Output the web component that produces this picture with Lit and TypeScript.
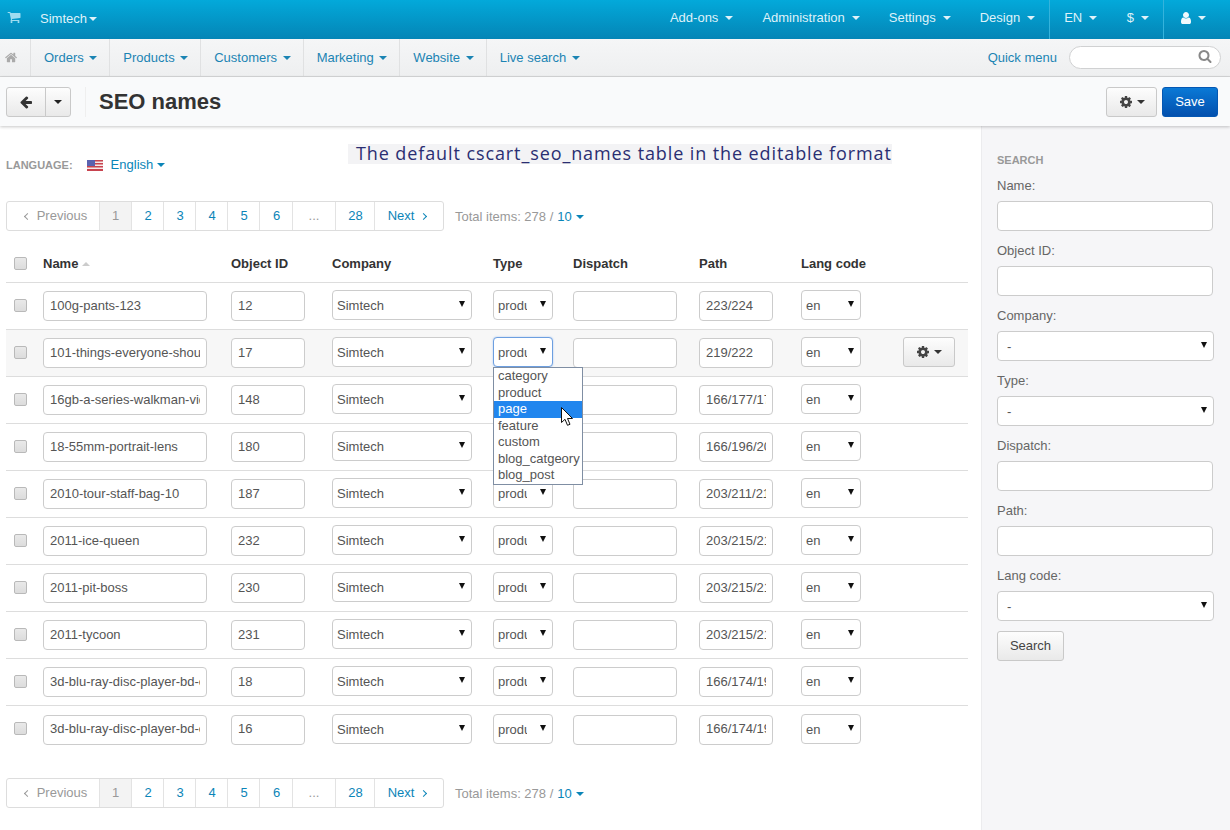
import { LitElement, html, css, svg } from "lit";
import { customElement } from "lit/decorators.js";

const P = {
  home: "M1408 992v480q0 26-19 45t-45 19h-384v-384h-256v384h-384q-26 0-45-19t-19-45v-480q0-1 .5-3t.5-3l575-474 575 474q1 2 1 6zm223-69l-62 74q-8 9-21 11h-3q-13 0-21-7l-692-577-692 577q-12 8-24 7-13-2-21-11l-62-74q-8-10-7-23.500t11-21.500l719-599q32-26 76-26t76 26l244 204v-195q0-14 9-23t23-9h192q14 0 23 9t9 23v408l219 182q10 8 11 21.500t-7 23.500z",
  cart: "M704 1536q0 52-38 90t-90 38-90-38-38-90 38-90 90-38 90 38 38 90zm896 0q0 52-38 90t-90 38-90-38-38-90 38-90 90-38 90 38 38 90zm128-1088v512q0 24-16.500 42.500t-40.500 21.500l-1044 122q13 60 13 70 0 16-24 64h920q26 0 45 19t19 45-19 45-45 19h-1024q-26 0-45-19t-19-45q0-11 8-31.500t16-36 21.500-40 15.500-29.500l-177-823h-204q-26 0-45-19t-19-45 19-45 45-19h256q16 0 28.500 6.500t19.500 15.500 13 24.500 8 26 5.500 29.500 4.500 26h1201q26 0 45 19t19 45z",
  user: "M1536 1399q0 109-62.500 187t-150.500 78h-854q-88 0-150.500-78t-62.500-187q0-85 8.500-160.500t31.500-152 58.500-131 94-89 134.500-34.500q131 128 313 128t313-128q76 0 134.500 34.500t94 89 58.500 131 31.500 152 8.500 160.500zm-256-887q0 159-112.500 271.500t-271.500 112.500-271.500-112.500-112.500-271.500 112.500-271.500 271.500-112.500 271.500 112.500 112.500 271.500z",
  cog: "M1152 896q0-106-75-181t-181-75-181 75-75 181 75 181 181 75 181-75 75-181zm512-109v222q0 12-8 23t-20 13l-185 28q-19 54-39 91 35 50 107 138 10 12 10 25t-9 23q-27 37-99 108t-94 71q-12 0-26-9l-138-108q-44 23-91 38-16 136-29 186-7 28-36 28h-222q-14 0-24.500-8.500t-11.500-21.500l-28-184q-49-16-90-37l-141 107q-10 9-25 9-14 0-25-11-126-114-165-168-7-10-7-23 0-12 8-23 15-21 51-66.500t54-70.500q-27-50-41-99l-183-27q-13-2-21-12.500t-8-23.500v-222q0-12 8-23t19-13l186-28q14-46 39-92-40-57-107-138-10-12-10-24 0-10 9-23 26-36 98.500-107.500t94.500-71.500q13 0 26 10l138 107q44-23 91-38 16-136 29-186 7-28 36-28h222q14 0 24.500 8.500t11.500 21.500l28 184q49 16 90 37l142-107q9-9 24-9 13 0 25 10 129 119 165 170 7 8 7 22 0 12-8 23-15 21-51 66.500t-54 70.500q26 50 41 98l183 28q13 2 21 12.500t8 23.500z",
  search: "M1216 832q0-185-131.500-316.500t-316.500-131.500-316.500 131.500-131.500 316.500 131.500 316.500 316.500 131.500 316.500-131.500 131.500-316.500zm512 832q0 52-38 90t-90 38q-54 0-90-38l-343-342q-179 124-399 124-143 0-273.500-55.500t-225-150-150-225-55.500-273.500 55.500-273.500 150-225 225-150 273.500-55.500 273.500 55.500 225 150 150 225 55.500 273.500q0 220-124 399l343 343q37 37 37 90z",
  back: "M1664 896v128q0 53-32.500 90.500t-84.500 37.500h-704l293 294q38 36 38 90t-38 90l-75 76q-37 37-90 37-52 0-90-37l-651-652q-37-37-37-90 0-52 37-91l651-650q38-38 90-38 52 0 90 38l75 74q38 38 38 91t-38 91l-293 293h704q52 0 84.500 37.500t32.500 90.500z",
};

const icon = (d: string, size: number, color: string) => html`<svg class="ic" width=${size} height=${size} viewBox="0 0 1792 1792" fill=${color}>${svg`<path d=${d}></path>`}</svg>`;

const ROWS = [
  ["100g-pants-123", "12", "223/224"],
  ["101-things-everyone-should-know", "17", "219/222"],
  ["16gb-a-series-walkman-video", "148", "166/177/178"],
  ["18-55mm-portrait-lens", "180", "166/196/206"],
  ["2010-tour-staff-bag-10", "187", "203/211/215"],
  ["2011-ice-queen", "232", "203/215/218"],
  ["2011-pit-boss", "230", "203/215/218"],
  ["2011-tycoon", "231", "203/215/218"],
  ["3d-blu-ray-disc-player-bd-c6500", "18", "166/174/190"],
  ["3d-blu-ray-disc-player-bd-c5500", "16", "166/174/190"],
];

const caret = () => html`<i class="caret"></i>`;

@customElement("app-root")
export class AppRoot extends LitElement {
  static styles = css`
    :host { display: block; width: 1230px; height: 830px; overflow: hidden; position: relative; font: 13px/18px "Liberation Sans", Arial, sans-serif; color: #555; background: #fff; }
    * { box-sizing: border-box; }
    .ic { display: block; flex: none; }
    .caret { display: inline-block; width: 0; height: 0; border: 4px solid transparent; border-top-color: currentColor; border-bottom: 0; flex: none; }
    .top { height: 39px; display: flex; align-items: center; background: linear-gradient(#03a9da, #0485b6); color: #dff2f9; padding-left: 7px; }
    .top .cart { margin-top: -6px; }
    .brand { display: flex; align-items: center; gap: 2px; margin-left: 19px; height: 39px; padding-bottom: 2px; }
    .spacer { flex: 1; }
    .menu { display: flex; align-items: center; gap: 7px; padding: 0 14.5px 3px; height: 39px; }
    .menu.tight { padding-right: 13.5px; }
    .menu.cur { padding-left: 15px; padding-right: 14px; }
    .menu.usr { padding-left: 15px; padding-right: 24px; gap: 5px; }
    .sep { width: 1px; height: 39px; background: #35b3dc; }
    .sub { height: 38px; display: flex; align-items: stretch; background: linear-gradient(#f5f6f7, #eeeff0); border-bottom: 1px solid #d6d7d8; color: #1b84b3; }
    .sub .home { width: 31px; border-right: 1px solid #e0e1e2; display: flex; align-items: center; padding-left: 5px; }
    .sub .item { display: flex; align-items: center; gap: 5.6px; padding: 0 12px 0 13px; border-right: 1px solid #e0e1e2; }
    .sub .item.end { border-right: 0; }
    .quick { display: flex; align-items: center; margin-right: 9px; gap: 12px; }
    .qsearch { width: 152px; height: 23px; border: 1px solid #d0d1d2; border-radius: 12px; background: #fff; display: flex; align-items: center; justify-content: flex-end; padding: 0 8px 3px 0; }
    .bar { height: 49px; background: #f9fafb; display: flex; align-items: center; padding: 0 12px 0 6px; box-shadow: 0 1px 3px rgba(0, 0, 0, .22); position: relative; z-index: 2; }
    .btn { display: flex; align-items: center; justify-content: center; height: 30px; border: 1px solid #c9c9c9; border-radius: 3px; background: linear-gradient(#fdfdfd, #e9e9e9); color: #444; font-size: 13px; }
    .bk { width: 40px; border-radius: 3px 0 0 3px; }
    .dd { width: 26px; margin-left: -1px; border-radius: 0 3px 3px 0; color: #222; }
    .bar .vr { width: 1px; height: 30px; background: #efefef; margin: 0 13px 0 14px; }
    h1 { margin: 0; font-size: 22px; line-height: 30px; font-weight: bold; color: #333; }
    .gear { width: 51px; gap: 4px; color: #333; }
    .save { width: 56px; margin-left: 5px; border: 1px solid #0457b3; background: linear-gradient(#0a79d6, #0350ae); color: #fff; }
    .body { display: flex; height: 704px; }
    .main { width: 981px; position: relative; padding: 0 13px 0 6px; }
    .side { width: 249px; border-left: 1px solid #ececee; background: #f6f6f8; padding: 25px 16px 0 15px; }
    .lang { height: 24px; margin-top: 27px; margin-bottom: 24px; display: flex; align-items: center; font-size: 11px; font-weight: bold; color: #999; }
    .lang .flag { margin: 0 8px 0 14px; display: block; }
    .lang a { display: flex; align-items: center; gap: 4px; font-size: 13px; font-weight: normal; color: #0b85b8; }
    .note { position: absolute; left: 348px; top: 18px; height: 20px; width: 544px; padding-left: 8px; background: #f3f3f5; color: #2a2e72; font: 18px/18px "Open Sans", "Noto Sans", sans-serif; letter-spacing: .9px; white-space: nowrap; }
    .pager { display: flex; align-items: center; height: 30px; }
    .pages { display: flex; height: 30px; border: 1px solid #ddd; border-radius: 3px; background: #fff; }
    .pages span { display: flex; align-items: center; justify-content: center; border-right: 1px solid #e3e3e3; color: #0b85b8; gap: 7px; }
    .pages span.num { padding-left: 1px; }
    .pages span:last-child { border-right: 0; padding-right: 4px; }
    .pages span:first-child { padding-left: 6px; }
    .pages .off { color: #999; }
    .pages .cur { background: #f3f3f3; color: #999; }
    .chev { width: 5px; height: 5px; border: solid currentColor; border-width: 1px 1px 0 0; transform: rotate(45deg); display: block; }
    .chev.l { transform: rotate(-135deg); }
    .total { margin-left: 11px; color: #999; display: flex; align-items: center; margin-top: 2px; gap: 4px; }
    .total b { font-weight: normal; color: #0b85b8; }
    .total .caret { color: #0b85b8; margin-left: 0; }
    .grid { display: grid; grid-template-columns: 8px 13px 16px 164px 24px 74px 27px 140px 21px 60px 20px 104px 22px 74px 28px 60px 42px 52px 1fr; align-items: center; }
    .cb { grid-column: 2; width: 13px; height: 13px; border: 1px solid #b9b9b9; border-radius: 2px; background: linear-gradient(#e9e9e9, #dcdcdc); }
    .row .cb { margin-top: -2px; }
    .thead { height: 42px; margin-top: 10px; padding-top: 4px; border-bottom: 1px solid #ddd; font-weight: bold; color: #333; }
    .thead .sort { display: inline-block; width: 0; height: 0; border: 4px solid transparent; border-bottom-color: #ccc; border-top: 0; margin-left: 4px; vertical-align: 2px; }
    .row { height: 47px; border-bottom: 1px solid #ddd; }
    .row.last { border-bottom: 0; }
    .row.hl { background: #f7f7f7; }
    .in { width: 100%; height: 30px; border: 1px solid #ccc; border-radius: 4px; background: #fff; padding: 0 6px 2px; font: 13px "Liberation Sans", Arial, sans-serif; color: #555; outline: 0; display: block; }
    .sel { display: flex; align-items: center; height: 30px; margin-top: -2px; border: 1px solid #ccc; border-radius: 4px; background: #fff; padding: 2px 4px 0; color: #555; position: relative; }
    .sel .t { width: 100%; overflow: hidden; white-space: nowrap; padding-right: 20px; }
    .sel .a { position: absolute; right: 6px; top: 10px; border: 3px solid transparent; border-top: 6px solid #111; border-bottom: 0; width: 0; height: 0; }
    .sel.focus { border-color: #6d9fe0; box-shadow: 0 0 2px #a6c6ef; }
    .sel.narrow .t { width: 29px; padding-right: 0; }
    .opts { position: absolute; left: 493px; top: 241px; width: 90px; height: 118px; border: 1px solid #7f8ea3; background: #fff; z-index: 5; line-height: 16.5px; color: #555; }
    .opts div { height: 16.5px; padding-left: 4px; white-space: nowrap; }
    .opts .on { background: #2186ee; color: #fff; }
    .cursor { position: absolute; left: 561px; top: 281px; z-index: 6; display: block; }
    .side h4 { margin: 0 0 8px; font-size: 11px; line-height: 18px; font-weight: bold; color: #999; letter-spacing: 0; }
    .f { height: 65px; }
    .f label { display: block; line-height: 18px; margin-bottom: 6px; color: #666; }
    .f .in { width: 216px; }
    .f .sel { width: 217px; margin-top: 0; padding: 2px 9px 0; }
    .go { width: 67px; margin-top: -1px; color: #444; }
    .gearbtn { width: 52px; gap: 4px; color: #333; margin-top: -2px; }
    .bottom { margin-top: 25px; }
  `;

  private sel(t: string, cls = "") {
    return html`<div class="sel ${cls}"><div class="t">${t}</div><i class="a"></i></div>`;
  }

  private pager(bottom = false) {
    const nums: [string, number, string][] = [["1", 32, "cur"], ["2", 32, "num"], ["3", 32, "num"], ["4", 32, "num"], ["5", 32, "num"], ["6", 33, "num"], ["...", 43, "off"], ["28", 39, "num"]];
    return html`<div class="pager ${bottom ? "bottom" : ""}">
      <div class="pages">
        <span class="off" style="width:93px"><i class="chev l"></i>Previous</span>
        ${nums.map(([t, w, c]) => html`<span class=${c} style="width:${w}px">${t}</span>`)}
        <span style="width:68px">Next<i class="chev"></i></span>
      </div>
      <div class="total">Total items: 278 / <b>10</b>${caret()}</div>
    </div>`;
  }

  render() {
    const items = ["Orders", "Products", "Customers", "Marketing", "Website", "Live search"];
    return html`
      <div class="top">
        <span class="cart">${icon(P.cart, 14, "#9fdcf0")}</span>
        <div class="brand">Simtech${caret()}</div>
        <div class="spacer"></div>
        ${["Add-ons", "Administration", "Settings"].map((m) => html`<div class="menu">${m}${caret()}</div>`)}
        <div class="menu tight">Design${caret()}</div>
        <i class="sep"></i>
        <div class="menu">EN${caret()}</div>
        <div class="menu cur">$${caret()}</div>
        <i class="sep"></i>
        <div class="menu usr">${icon(P.user, 14, "#f0fafd")}${caret()}</div>
      </div>
      <div class="sub">
        <div class="home">${icon(P.home, 13, "#aaa")}</div>
        ${items.map((m, i) => html`<div class="item ${i === items.length - 1 ? "end" : ""}">${m}${caret()}</div>`)}
        <div class="spacer"></div>
        <div class="quick">Quick menu<div class="qsearch">${icon(P.search, 14, "#888")}</div></div>
      </div>
      <div class="bar">
        <div class="btn bk">${icon(P.back, 14, "#333")}</div>
        <div class="btn dd">${caret()}</div>
        <i class="vr"></i>
        <h1>SEO names</h1>
        <div class="spacer"></div>
        <div class="btn gear">${icon(P.cog, 14, "#444")}${caret()}</div>
        <div class="btn save">Save</div>
      </div>
      <div class="body">
        <div class="main">
          <div class="lang">LANGUAGE:
            <svg class="flag" width="16" height="11" viewBox="0 0 16 11">
              <rect width="16" height="11" fill="#f4eaea"></rect>
              <rect y="0" width="16" height="1.500" fill="#c8434f"></rect><rect y="3" width="16" height="1.500" fill="#c8434f"></rect><rect y="6" width="16" height="1.500" fill="#c8434f"></rect><rect y="9" width="16" height="2" fill="#c8434f"></rect>
              <rect width="8" height="6" fill="#5a62b0"></rect>
            </svg>
            <a>English${caret()}</a>
          </div>
          <div class="note">The default cscart_seo_names table in the editable format</div>
          ${this.pager()}
          <div class="grid thead">
            <i class="cb"></i>
            <span style="grid-column:4">Name<i class="sort"></i></span>
            <span style="grid-column:6">Object ID</span>
            <span style="grid-column:8">Company</span>
            <span style="grid-column:10">Type</span>
            <span style="grid-column:12">Dispatch</span>
            <span style="grid-column:14">Path</span>
            <span style="grid-column:16 / span 2">Lang code</span>
          </div>
          ${ROWS.map((r, i) => html`<div class="grid row ${i === 1 ? "hl" : ""} ${i === 9 ? "last" : ""}">
            <i class="cb"></i>
            <input class="in" style="grid-column:4" .value=${r[0]} />
            <input class="in" style="grid-column:6" .value=${r[1]} />
            <div style="grid-column:8">${this.sel("Simtech")}</div>
            <div style="grid-column:10">${this.sel("product", i === 1 ? "narrow focus" : "narrow")}</div>
            <input class="in" style="grid-column:12" />
            <input class="in" style="grid-column:14" .value=${r[2]} />
            <div style="grid-column:16">${this.sel("en")}</div>
            ${i === 1 ? html`<div class="btn gearbtn" style="grid-column:18">${icon(P.cog, 14, "#444")}${caret()}</div>` : ""}
          </div>`)}
          ${this.pager(true)}
          <div class="opts">
            ${["category", "product", "page", "feature", "custom", "blog_catgeory", "blog_post"].map((o) => html`<div class=${o === "page" ? "on" : ""}>${o}</div>`)}
          </div>
          <svg class="cursor" width="13" height="20" viewBox="0 0 13 20">
            <path d="M.5.5v15l3.500-3.200 2.500 6 2.500-1-2.500-5.800h5z" fill="#fff" stroke="#111" stroke-width="1" stroke-linejoin="round"></path>
          </svg>
        </div>
        <div class="side">
          <h4>SEARCH</h4>
          ${["Name:", "Object ID:"].map((l) => html`<div class="f"><label>${l}</label><input class="in" /></div>`)}
          <div class="f"><label>Company:</label>${this.sel("-")}</div>
          <div class="f"><label>Type:</label>${this.sel("-")}</div>
          ${["Dispatch:", "Path:"].map((l) => html`<div class="f"><label>${l}</label><input class="in" /></div>`)}
          <div class="f"><label>Lang code:</label>${this.sel("-")}</div>
          <div class="btn go">Search</div>
        </div>
      </div>
    `;
  }
}
